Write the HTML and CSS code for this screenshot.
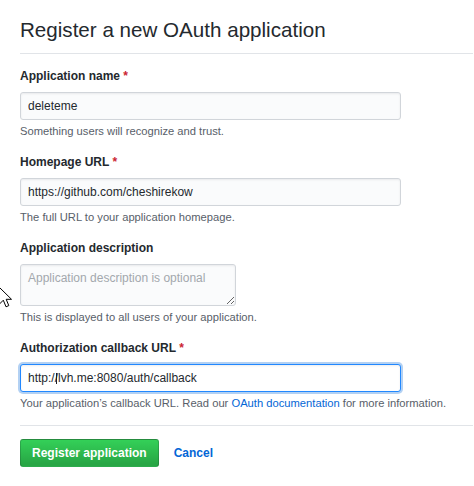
FILE: index.html
```html
<!DOCTYPE html>
<html lang="en">
<head>
<meta charset="utf-8">
<title>Register a new OAuth application</title>
<link rel="stylesheet" href="styles.css">
</head>
<body>
<div class="page">
  <h1 class="title">Register a new OAuth application</h1>
  <form class="form">
    <div class="group">
      <label class="label">Application name <span class="req">*</span></label>
      <input class="input" type="text" value="deleteme">
      <p class="note">Something users will recognize and trust.</p>
    </div>
    <div class="group">
      <label class="label">Homepage URL <span class="req">*</span></label>
      <input class="input" type="text" value="https://github.com/cheshirekow">
      <p class="note">The full URL to your application homepage.</p>
    </div>
    <div class="group">
      <label class="label">Application description</label>
      <textarea class="textarea" placeholder="Application description is optional"></textarea>
      <p class="note">This is displayed to all users of your application.</p>
    </div>
    <div class="group last">
      <label class="label">Authorization callback URL <span class="req">*</span></label>
      <div class="field">
        <input class="input focused" type="text" value="http://lvh.me:8080/auth/callback">
        <span class="ibeam"></span>
      </div>
      <p class="note">Your application’s callback URL. Read our <a class="link" href="#">OAuth documentation</a> for more information.</p>
    </div>
    <div class="actions">
      <button class="btn" type="button">Register application</button>
      <a class="cancel" href="#">Cancel</a>
    </div>
  </form>
  <svg class="pointer" width="14" height="22" viewBox="0 0 14 22" aria-hidden="true">
    <path d="M0.5 0.5 L0.5 17 L4.3 13.2 L7 19.8 L9.8 18.6 L7.2 12.3 L12.5 12.3 Z" fill="#fff" stroke="#000" stroke-width="1" stroke-linejoin="round"/>
  </svg>
</div>
</body>
</html>
```

FILE: styles.css
```css
html, body {
  margin: 0;
  padding: 0;
  background: #ffffff;
}

body {
  font-family: "Liberation Sans", Arial, Helvetica, sans-serif;
  color: #24292e;
}

.page {
  position: relative;
  padding: 17px 1px 0 20px;
  overflow: hidden;
  height: 469px;
}

.title {
  margin: 0;
  font-size: 20.6px;
  font-weight: 400;
  line-height: 26px;
  padding-bottom: 10px;
  border-bottom: 1px solid #e1e4e8;
  color: #24292e;
}

.form {
  margin-top: 15px;
}

.group {
  margin-bottom: 16px;
}

.group.last {
  margin-bottom: 0;
}

.label {
  display: block;
  font-size: 12px;
  font-weight: 700;
  line-height: 15px;
  margin-bottom: 8px;
}

.req {
  color: #cb2431;
}

.field {
  position: relative;
  width: 381px;
}

.input,
.textarea {
  display: block;
  box-sizing: border-box;
  font-family: "Liberation Sans", Arial, Helvetica, sans-serif;
  font-size: 12px;
  line-height: 16px;
  color: #24292e;
  background: #fafbfc;
  border: 1px solid #d1d5da;
  border-radius: 3px;
  box-shadow: inset 0 1px 2px rgba(27, 31, 35, 0.075);
  outline: none;
  margin: 0;
}

.input {
  width: 381px;
  height: 28px;
  padding: 5px 7px;
}

.input.focused {
  background: #ffffff;
  border-color: #2188ff;
  box-shadow: inset 0 1px 2px rgba(27, 31, 35, 0.075), 0 0 0 2px rgba(3, 102, 214, 0.3);
}

.textarea {
  width: 216px;
  height: 42px;
  padding: 5px 7px;
  resize: both;
}

.textarea::placeholder {
  color: #a3a8ad;
}

.ibeam {
  position: absolute;
  left: 35.5px;
  top: 9px;
  width: 1.5px;
  height: 11px;
  background: #1b1f23;
}

.note {
  margin: 4px 0 0;
  font-size: 11.2px;
  line-height: 15px;
  color: #586069;
}

.link {
  color: #0366d6;
  text-decoration: none;
}

.actions {
  display: flex;
  align-items: center;
  margin-top: 14px;
  padding-top: 13px;
  border-top: 1px solid #e1e4e8;
}

.btn {
  height: 28px;
  padding: 0 11px;
  font-family: "Liberation Sans", Arial, Helvetica, sans-serif;
  font-size: 12px;
  font-weight: 700;
  line-height: 26px;
  color: #ffffff;
  background-image: linear-gradient(-180deg, #34d058 0%, #28a745 90%);
  border: 1px solid rgba(27, 31, 35, 0.2);
  border-radius: 3px;
}

.cancel {
  margin-left: 15px;
  font-size: 12px;
  font-weight: 700;
  color: #0366d6;
  text-decoration: none;
}

.pointer {
  position: absolute;
  left: -1px;
  top: 287px;
}
```
